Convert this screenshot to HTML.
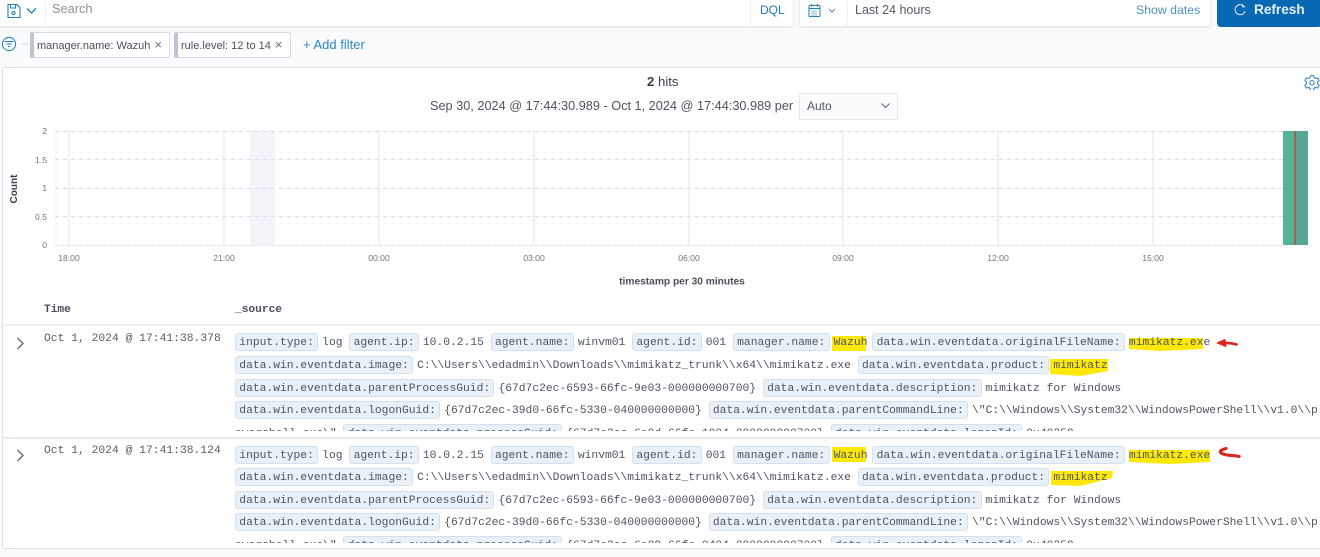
<!DOCTYPE html>
<html><head><meta charset="utf-8"><style>
html,body{margin:0;padding:0}
body{width:1320px;height:557px;overflow:hidden;position:relative;background:#fafbfd;font-family:"Liberation Sans",sans-serif;color:#343741;filter:blur(.3px)}
.a{position:absolute;white-space:nowrap}
.box{position:absolute;background:#fff;box-shadow:0 1px 2px rgba(152,162,179,.35);box-sizing:border-box}
.pill{position:absolute;top:32px;height:26px;box-sizing:border-box;background:#fff;border:1px solid #d3dae6;border-left:4px solid #bcc5d3;border-radius:2px;font-size:11px;line-height:24px;padding-left:3px;color:#4a4f5c;white-space:nowrap}
.pill i{font-style:normal;color:#69707d;font-size:13px;margin-left:4px}
.l{position:absolute;left:235px;height:21px;white-space:pre;font:11.3px/21px "Liberation Mono",monospace;color:#4e5461}
.l b{font-weight:normal;display:inline-block;height:18px;line-height:19px;box-sizing:border-box;padding:0 3.3px;margin-right:4px;background:#e9f0f7;border:1px solid #d3e1ee;border-radius:3px;color:#4e5461;vertical-align:top}
.l s{text-decoration:none;margin-right:-2px}
.clip{position:absolute;left:0;width:1320px;overflow:hidden}
.t{position:absolute;left:44px;font:11.33px/14px "Liberation Mono",monospace;color:#555b68;white-space:pre}
.yt{font-size:8.6px;fill:#6f7480;font-family:"Liberation Sans",sans-serif}
</style></head><body>

<!-- top bar -->
<div class="box" style="left:-2px;top:-2px;width:795px;height:28px"></div>
<div class="a" style="left:45px;top:0;width:1px;height:26px;background:#eef0f4"></div>
<svg class="a" style="left:7px;top:3px" width="34" height="16" viewBox="0 0 34 16" fill="none" stroke="#1f7fc0" stroke-width="1.1"><path d="M1 1.500h9l3 3v10H1z"/><path d="M3.500 1.500v3.500h5V1.500"/><circle cx="6.500" cy="10" r="1.600"/><path d="M20 5.500l4.500 4.500 4.500-4.500" stroke-width="1.300"/></svg>
<div class="a" style="left:52px;top:1px;font-size:12.8px;line-height:16px;color:#8e939d">Search</div>
<div class="a" style="left:750px;top:0;width:1px;height:26px;background:#eef0f4"></div>
<div class="a" style="left:760px;top:2px;font-size:12px;line-height:16px;color:#1f78b8">DQL</div>

<div class="box" style="left:800px;top:-2px;width:410px;height:28px"></div>
<div class="a" style="left:847px;top:0;width:1px;height:26px;background:#eef0f4"></div>
<svg class="a" style="left:808px;top:3px" width="32" height="15" viewBox="0 0 32 15" fill="none" stroke="#1f7fc0"><rect x="1" y="2.500" width="11" height="11" rx="1"/><path d="M1 5.500h11M3.500 1v2.500M9.500 1v2.500"/><path d="M3.500 8h6M3.500 10h6M3.500 12h6" stroke-dasharray="1 1"/><path d="M21 6l3 3 3-3" stroke="#5a8fb8"/></svg>
<div class="a" style="left:855px;top:2px;font-size:12.5px;line-height:16px;color:#555b66">Last 24 hours</div>
<div class="a" style="left:1136px;top:2px;font-size:12.3px;line-height:16px;color:#4f8fc2">Show dates</div>

<div class="a" style="left:1217px;top:-4px;width:105px;height:31px;background:#0868b3;border-radius:4px"></div>
<svg class="a" style="left:1233px;top:3px" width="14" height="14" viewBox="0 0 14 14" fill="none" stroke="#cfe3f3" stroke-width="1.100"><path d="M11.500 4.200A5 5 0 1 0 12 8"/><path d="M9.500 1v2.800h2.800" stroke-width="1"/></svg>
<div class="a" style="left:1254px;top:1px;font-size:13.6px;line-height:18px;font-weight:bold;color:#e3eff8">Refresh</div>

<!-- filter row -->
<svg class="a" style="left:1px;top:36px" width="28" height="16" viewBox="0 0 28 16" fill="none" stroke="#1f7fc0"><circle cx="8" cy="8" r="6.600"/><path d="M3.500 5.500h9M5.500 8h5M7 10.500h2"/><path d="M20 8h9" stroke="#d3dae6"/></svg>
<div class="pill" style="left:30px;width:140px">manager.name: Wazuh<i>×</i></div>
<div class="pill" style="left:174px;width:117px">rule.level: 12 to 14<i>×</i></div>
<div class="a" style="left:303px;top:37px;font-size:13px;line-height:16px;color:#2d86c4">+ Add filter</div>

<!-- main panel -->
<div class="a" style="left:2px;top:67px;width:1330px;height:482px;box-sizing:border-box;background:#fff;border:1px solid #dde3ee;border-radius:3px"></div>

<div class="a" style="left:647px;top:74px;font-size:13.2px;line-height:16px;color:#3a3f4b"><strong>2</strong> hits</div>
<svg class="a" style="left:1304px;top:74px" width="16" height="16" viewBox="0 0 16 16" fill="none" stroke="#3a8ac6" stroke-width="1.100"><path d="M6.500 1.500h3l.5 2 1.700 1 2-.6 1.400 2.600-1.500 1.500v2l1.500 1.500-1.400 2.500-2-.6-1.700 1-.5 2h-3"/><path d="M6.500 1.500l-.5 2-1.700 1-2-.6-1.400 2.600 1.500 1.500v2l-1.500 1.500 1.400 2.500 2-.6 1.700 1 .5 2"/><circle cx="8" cy="8.700" r="2.100"/></svg>
<div class="a" style="left:430px;top:98px;font-size:12.72px;line-height:16px;color:#4e5461">Sep 30, 2024 @ 17:44:30.989 - Oct 1, 2024 @ 17:44:30.989 per</div>
<div class="a" style="left:799px;top:93px;width:99px;height:27px;box-sizing:border-box;background:#fbfcfd;border:1px solid #e6e9f0;font-size:12px;line-height:25px;padding-left:7px;color:#4e5461">Auto</div>
<svg class="a" style="left:880px;top:102px" width="11" height="8" viewBox="0 0 11 8" fill="none" stroke="#5a606c"><path d="M1.500 1.500l4 4 4-4"/></svg>

<!-- chart -->
<svg class="a" style="left:0;top:120px" width="1320" height="175" viewBox="0 120 1320 175">
<rect x="250" y="131" width="25" height="114" fill="#f3f4f9"/>
<g stroke="#e6e9f1" stroke-width="1.300"><path d="M69 131V245M224 131V245M379 131V245M534 131V245M689 131V245M843 131V245M998 131V245M1153 131V245"/></g>
<path d="M56 131V245" stroke="#eef0f4"/>
<g stroke="#d5dcef" stroke-dasharray="4 4"><path d="M55 131.500H1283M55 159.500H1283M55 188.500H1283M55 216.500H1283"/></g>
<path d="M55 245.500H1283" stroke="#e0e3ea" stroke-dasharray="4 2"/>
<rect x="1283" y="131" width="12" height="114" fill="#54b399"/>
<rect x="1295" y="131" width="13" height="114" fill="#57a692"/>
<rect x="1294" y="131" width="2" height="114" fill="#a4624f"/>
<g class="yt" text-anchor="end"><text x="47" y="134">2</text><text x="47" y="163">1.5</text><text x="47" y="191">1</text><text x="47" y="220">0.5</text><text x="47" y="248">0</text></g>
<g class="yt" text-anchor="middle"><text x="69" y="261">18:00</text><text x="224" y="261">21:00</text><text x="379" y="261">00:00</text><text x="534" y="261">03:00</text><text x="689" y="261">06:00</text><text x="843" y="261">09:00</text><text x="998" y="261">12:00</text><text x="1153" y="261">15:00</text></g>
<text transform="translate(17 189) rotate(-90)" text-anchor="middle" font-size="10" font-weight="bold" fill="#3a3f4b" font-family="Liberation Sans">Count</text>
<text x="682" y="284.500" text-anchor="middle" font-size="10.200" font-weight="bold" fill="#4a4f5c" font-family="Liberation Sans">timestamp per 30 minutes</text>
</svg>

<!-- table -->
<div class="a" style="left:44px;top:303px;font:bold 11.2px/14px 'Liberation Mono',monospace;color:#4a4f5c">Time</div>
<div class="a" style="left:235px;top:303px;font:bold 11.2px/14px 'Liberation Mono',monospace;color:#4a4f5c">_source</div>
<div class="a" style="left:3px;top:324px;width:1317px;height:2px;background:#eceff5"></div>
<div class="a" style="left:3px;top:436.500px;width:1317px;height:2px;background:#e6e9f0"></div>

<svg class="a" style="left:16px;top:337px" width="10" height="13" viewBox="0 0 10 13" fill="none" stroke="#444a55" stroke-width="1.100"><path d="M1.500 1l5.500 5.500-5.500 5.500"/></svg>
<svg class="a" style="left:16px;top:449px" width="10" height="13" viewBox="0 0 10 13" fill="none" stroke="#444a55" stroke-width="1.100"><path d="M1.500 1l5.500 5.500-5.500 5.500"/></svg>

<div class="t" style="top:332px">Oct 1, 2024 @ 17:41:38.378</div>
<div class="t" style="top:444px">Oct 1, 2024 @ 17:41:38.124</div>

<!-- row 1 -->
<div class="clip" style="top:326px;height:105px">
<svg class="a" style="left:0;top:0" width="1320" height="105" viewBox="0 326 1320 105"><path d="M1129 338H1203V349L1160 351 1129 349Z" fill="#fde80a"/><path d="M1050 359H1108V371L1080 376 1050 374Z" fill="#fde80a"/><path d="M832 336H866V351H832Z" fill="#fde80a"/><path d="M1236.500 344.500C1231 342.500 1227 343.500 1220 342.500" fill="none" stroke="#dc2626" stroke-width="2.600" stroke-linecap="round"/><path d="M1217 343L1225 339.500 1226 346.500Z" fill="#dc2626" stroke="#dc2626" stroke-linejoin="round"/></svg>
<div class="l" style="top:7px"><b>input.type:</b>log <b>agent.ip:</b>10.0.2.15 <b>agent.name:</b>winvm01 <b>agent.id:</b>001 <b>manager.name:</b><s>Wazuh</s> <b>data.win.eventdata.originalFileName:</b>mimikatz.exe</div>
<div class="l" style="top:30px"><b>data.win.eventdata.image:</b>C:\\Users\\edadmin\\Downloads\\mimikatz_trunk\\x64\\mimikatz.exe <b>data.win.eventdata.product:</b>mimikatz</div>
<div class="l" style="top:53px"><b>data.win.eventdata.parentProcessGuid:</b>{67d7c2ec-6593-66fc-9e03-000000000700} <b>data.win.eventdata.description:</b>mimikatz for Windows</div>
<div class="l" style="top:75px"><b>data.win.eventdata.logonGuid:</b>{67d7c2ec-39d0-66fc-5330-040000000000} <b>data.win.eventdata.parentCommandLine:</b>\"C:\\Windows\\System32\\WindowsPowerShell\\v1.0\\p</div>
<div class="l" style="top:98px">owershell.exe\" <b>data.win.eventdata.processGuid:</b>{67d7c2ec-6c0d-66fc-1904-000000000700} <b>data.win.eventdata.logonId:</b>0x40259</div>
</div>

<!-- row 2 -->
<div class="clip" style="top:438px;height:105px">
<svg class="a" style="left:0;top:0" width="1320" height="105" viewBox="0 438 1320 105"><path d="M1129 450H1210V462L1170 464 1129 462Z" fill="#fde80a"/><path d="M1051 471H1113L1112 478 1080 486 1051 485Z" fill="#fde80a"/><path d="M832 447H866V462H832Z" fill="#fde80a"/><path d="M1239 456.500C1232 454.500 1228 456.500 1222 453.500C1218 451.500 1222 449.500 1226 448.500" fill="none" stroke="#dc2626" stroke-width="3.200" stroke-linecap="round"/></svg>
<div class="l" style="top:8px"><b>input.type:</b>log <b>agent.ip:</b>10.0.2.15 <b>agent.name:</b>winvm01 <b>agent.id:</b>001 <b>manager.name:</b><s>Wazuh</s> <b>data.win.eventdata.originalFileName:</b>mimikatz.exe</div>
<div class="l" style="top:30px"><b>data.win.eventdata.image:</b>C:\\Users\\edadmin\\Downloads\\mimikatz_trunk\\x64\\mimikatz.exe <b>data.win.eventdata.product:</b>mimikatz</div>
<div class="l" style="top:53px"><b>data.win.eventdata.parentProcessGuid:</b>{67d7c2ec-6593-66fc-9e03-000000000700} <b>data.win.eventdata.description:</b>mimikatz for Windows</div>
<div class="l" style="top:75px"><b>data.win.eventdata.logonGuid:</b>{67d7c2ec-39d0-66fc-5330-040000000000} <b>data.win.eventdata.parentCommandLine:</b>\"C:\\Windows\\System32\\WindowsPowerShell\\v1.0\\p</div>
<div class="l" style="top:98px">owershell.exe\" <b>data.win.eventdata.processGuid:</b>{67d7c2ec-6c09-66fc-0404-000000000700} <b>data.win.eventdata.logonId:</b>0x40259</div>
</div>

</body></html>
